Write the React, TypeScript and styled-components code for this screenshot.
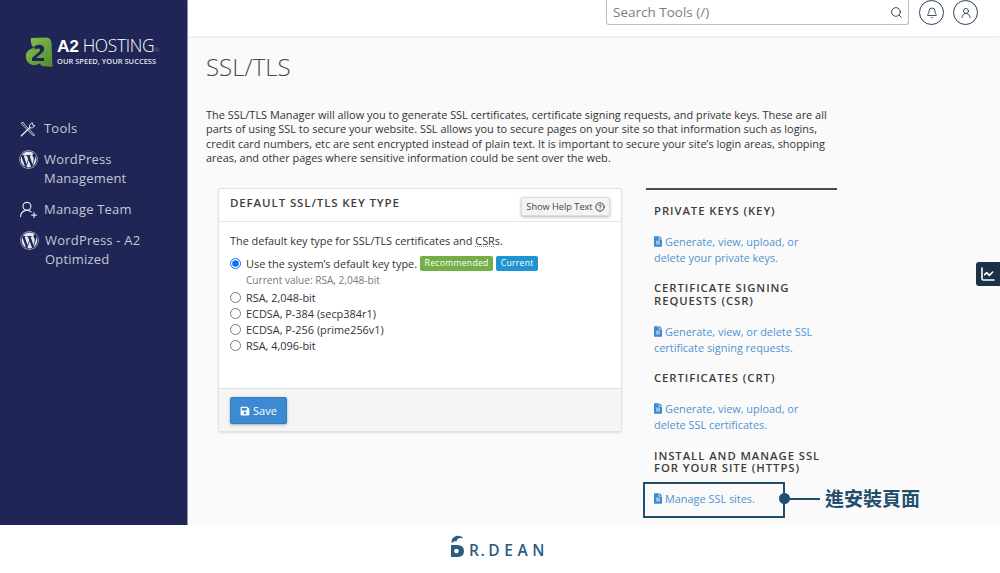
import React from 'react'
import styled, { createGlobalStyle } from 'styled-components'
import { Bell, Search, UserRoundPlus, UserRound, CircleHelp, ChartLine } from 'lucide-react'
import { FaWordpress, FaFileAlt, FaSave } from 'react-icons/fa'

const GlobalStyle = createGlobalStyle`
    html, body { margin:0; padding:0; background:#fff; }
    body { font-family:"Open Sans","Noto Sans",sans-serif; }
    * { box-sizing:border-box; }
`

const Page = styled.div`
    position:relative;
    width:1000px;
    height:573px;
    overflow:hidden;
    display:flex;
    flex-direction:column;
`

const Shot = styled.div`
    display:flex;
    height:525px;
`

const Sidebar = styled.aside`
    width:188px;
    flex:none;
    background:#1f2555;
    border-right:1px solid #8d90b0;
    padding-top:36px;
`

const LogoRow = styled.div`
    display:flex;
    align-items:center;
    gap:4px;
    padding-left:25px;
    height:31px;
`

const LogoText = styled.div`
    display:flex;
    flex-direction:column;
    color:#fff;
`

const LogoName = styled.div`
    font-size:17.4px;
    line-height:14px;
    font-weight:300;
    letter-spacing:-0.35px;
    white-space:nowrap;
    b { font-family:"Liberation Sans",sans-serif; font-weight:700; }
    small { font-size:6px; color:#9a9db5; }
`

const LogoTag = styled.div`
    font-size:7.5px;
    line-height:8px;
    font-weight:600;
    white-space:nowrap;
    color:#e4e5ee;
`

const Nav = styled.nav`
    margin-top:52px;
    display:flex;
    flex-direction:column;
    gap:12px;
`

const NavItem = styled.a<{ $shift?: number }>`
    display:flex;
    align-items:flex-start;
    gap:6px;
    padding-left:${p => p.$shift ?? 18}px;
    color:#c6c8d6;
    font-size:13px;
    line-height:19px;
    letter-spacing:0.2px;
    svg { flex:none; color:#e3e4ec; }
`

const NavIcon = styled.span`
    width:20px;
    height:19px;
    display:flex;
    align-items:center;
    justify-content:center;
    flex:none;
`

const Content = styled.div`
    flex:1;
    display:flex;
    flex-direction:column;
    background:#fafafa;
    min-width:0;
`

const Topbar = styled.header`
    height:36px;
    flex:none;
    background:#fff;
    box-shadow:0 1px 3px rgba(0,0,0,.08);
    display:flex;
    justify-content:flex-end;
    gap:9px;
    padding-right:22px;
`

const SearchBox = styled.div`
    width:303px;
    height:25px;
    margin-right:1px;
    border:1px solid #b9bccb;
    border-top:none;
    border-radius:0 0 3px 3px;
    background:#fff;
    display:flex;
    align-items:center;
    justify-content:space-between;
    padding:0 5px 0 6px;
    font-size:13.5px;
    color:#7d7d7d;
    svg { color:#3a4254; }
`

const RoundButton = styled.button`
    width:25px;
    height:25px;
    padding:0;
    border:1px solid #2d3a5c;
    border-radius:50%;
    background:#fff;
    color:#2d3a5c;
    display:flex;
    align-items:center;
    justify-content:center;
`

const Main = styled.main`
    padding:0 0 0 18px;
    position:relative;
    flex:1;
`

const Title = styled.h1`
    margin:15px 0 0;
    font-size:24px;
    line-height:32px;
    font-weight:300;
    color:#4a4a4a;
`

const Intro = styled.p`
    margin:25px 0 0;
    width:628px;
    font-size:10.93px;
    line-height:14.3px;
    color:#333;
`

const Columns = styled.div`
    display:flex;
    align-items:flex-start;
    margin-top:23px;
    padding-left:12px;
    gap:24px;
`

const Card = styled.section`
    width:404px;
    height:244px;
    background:#fff;
    border:1px solid #e2e2e2;
    border-radius:3px;
    box-shadow:0 1px 2px rgba(0,0,0,.1);
    display:flex;
    flex-direction:column;
`

const CardHeader = styled.div`
    height:33px;
    flex:none;
    border-bottom:1px solid #e6e6e6;
    display:flex;
    justify-content:space-between;
    padding:5px 11px 0 11px;
`

const CardTitle = styled.h2`
    margin:0;
    font-size:11.5px;
    line-height:17px;
    font-weight:600;
    letter-spacing:0.88px;
    color:#3d3d3d;
`

const HelpButton = styled.button`
    width:89px;
    height:19px;
    margin-top:3px;
    padding:0;
    border:1px solid #ddd;
    border-radius:2px;
    background:#f4f4f4;
    box-shadow:0 1px 3px rgba(0,0,0,.3);
    font:9.2px "Open Sans",sans-serif;
    color:#444;
    display:flex;
    align-items:center;
    justify-content:center;
    gap:2px;
`

const CardBody = styled.div`
    flex:1;
    padding:11px 11px 0;
    font-size:10.9px;
    color:#333;
`

const Lead = styled.p`
    margin:0 0 6px;
    line-height:16px;
    abbr { text-decoration:underline dotted #999; }
`

const RadioRow = styled.label`
    display:flex;
    align-items:center;
    gap:5px;
    height:16px;
`

const RadioLabel = styled.span`
    display:flex;
    align-items:center;
    gap:3px;
`

const Radio = styled.input.attrs({ type: 'radio' })`
    width:11px;
    height:11px;
    margin:0;
    flex:none;
    accent-color:#0d6efd;
`

const Badge = styled.span<{ $color: string }>`
    padding:0 4.5px;
    height:15px;
    display:inline-flex;
    align-items:center;
    border-radius:2px;
    background:${p => p.$color};
    color:#fff;
    font-size:8.6px;
    letter-spacing:0.3px;
`

const Hint = styled.div`
    margin:2px 0 1px 16px;
    font-size:10.1px;
    line-height:15px;
    color:#7a7a7a;
`

const CardFooter = styled.div`
    height:43px;
    flex:none;
    background:#f5f5f5;
    border-top:1px solid #e2e2e2;
    padding:8px 11px 0;
`

const SaveButton = styled.button`
    width:57px;
    height:27px;
    padding:0;
    border:1px solid #2f7cc0;
    border-radius:2px;
    background:#3c8ad1;
    box-shadow:0 1px 3px rgba(0,0,0,.3);
    color:#fff;
    font:11px "Open Sans",sans-serif;
    display:flex;
    align-items:center;
    justify-content:center;
    gap:3px;
`

const Side = styled.aside`
    width:191px;
    border-top:2px solid #4a4a4a;
    padding:15px 0 0 8px;
`

const SideHeading = styled.h3`
    margin:0 0 16px;
    font-size:11.3px;
    line-height:12.7px;
    font-weight:600;
    letter-spacing:0.95px;
    color:#3d3d3d;
`

const SideLink = styled.a`
    display:block;
    margin-bottom:16px;
    font-size:10.9px;
    line-height:16.3px;
    color:#4f93d1;
    svg { width:8px; height:11px; vertical-align:-1px; margin-right:3px; color:#3c8ad1; }
`

const Annotation = styled.div`
    position:absolute;
    left:643px;
    top:482px;
    width:142px;
    height:36px;
    border:2px solid #1f4e6e;
`

const CalloutDot = styled.span`
    position:absolute;
    left:779px;
    top:493px;
    width:11px;
    height:11px;
    border-radius:50%;
    background:#1f4e6e;
`

const CalloutLine = styled.span`
    position:absolute;
    left:788px;
    top:498px;
    width:32px;
    height:2px;
    background:#1f4e6e;
`

const CalloutText = styled.span`
    position:absolute;
    left:825px;
    top:485px;
    font-family:"Noto Sans CJK TC",sans-serif;
    font-size:19px;
    line-height:26px;
    font-weight:700;
    color:#1f4e6e;
`

const StatsTab = styled.div`
    position:absolute;
    right:0;
    top:262px;
    width:24px;
    height:24px;
    background:#1c3047;
    border-radius:3px 0 0 3px;
    color:#fff;
    display:flex;
    align-items:center;
    justify-content:center;
`

const Footer = styled.footer`
    height:48px;
    background:#fff;
    display:flex;
    align-items:flex-start;
    justify-content:center;
    padding-top:10px;
`

const Brand = styled.div`
    display:flex;
    align-items:flex-end;
    color:#2c5c80;
    font-size:15.5px;
    font-weight:600;
    line-height:13px;
    letter-spacing:4.6px;
`

const BrandInitial = styled.span`
    margin:0 2px 0 5px;
    letter-spacing:1.5px;
`

const A2Mark = () => (
    <svg width="28" height="30" viewBox="0 0 28 30">
        <defs>
            <linearGradient id="a2g" x1="0" y1="0" x2="1" y2="1">
                <stop offset="0" stopColor="#8cc152" />
                <stop offset="1" stopColor="#4f8a2c" />
            </linearGradient>
        </defs>
        <path d="M6 1 L22 0.5 Q26 1 26.5 6 L27.5 30 L17 29 L14.5 26.5 Q8 30 3.5 26 Q0 22 1 17 Q3 12 9 11 Q5 8 6 1 Z" fill="url(#a2g)" />
        <path d="M9 9.5 Q14 6.5 18 9 Q20.5 12 17.5 15.5 L11 21 L19 21 L19 24 L7 24 L7 21 L14.5 14.5 Q16 12.5 14 11.5 Q12 11 10 12.5 Z" fill="#1f2555" />
    </svg>
)

const ToolsIcon = () => (
    <svg width="16" height="16" viewBox="0 0 16 16" fill="none" stroke="currentColor" strokeWidth="1.4" strokeLinecap="round" strokeLinejoin="round">
        <path d="M1.5 2 L3 1.2 L5.5 4.6 L14.6 14 L13.6 15 L4.4 5.8 Z" strokeWidth="0.9" />
        <path d="M1.4 14.8 L9.8 6.4" />
        <path d="M9.8 6.4 L9.6 4 L12 1.6 L12.8 4.2 L15 4.6 L12.4 6.8 Z" strokeWidth="1" />
    </svg>
)

const DeanMark = () => (
    <svg width="13" height="22" viewBox="0 0 13 22">
        <path d="M0.5 8 Q0 2 6 0.8 Q10 0 12.5 3.2 L9.5 3 Q6 3.2 5.5 6.6 L4 6 Z" fill="#2c5c80" />
        <path d="M0 10 L6 10 Q13 10 13 16 Q13 22 6 22 L0 22 Z" fill="#2c5c80" />
        <circle cx="5.5" cy="16" r="2.3" fill="#fff" />
    </svg>
)

const App: React.FC = () => {
    return (
        <Page>
            <GlobalStyle />
            <Shot>
                <Sidebar>
                    <LogoRow>
                        <A2Mark />
                        <LogoText>
                            <LogoName><b>A2</b> HOSTING<small>®</small></LogoName>
                            <LogoTag>OUR SPEED, YOUR SUCCESS</LogoTag>
                        </LogoText>
                    </LogoRow>
                    <Nav>
                        <NavItem><NavIcon><ToolsIcon /></NavIcon>Tools</NavItem>
                        <NavItem><NavIcon><FaWordpress size={19} /></NavIcon><span>WordPress<br />Management</span></NavItem>
                        <NavItem><NavIcon><UserRoundPlus size={19} strokeWidth={1.5} /></NavIcon>Manage Team</NavItem>
                        <NavItem $shift={19}><NavIcon><FaWordpress size={19} /></NavIcon><span>WordPress - A2<br />Optimized</span></NavItem>
                    </Nav>
                </Sidebar>
                <Content>
                    <Topbar>
                        <SearchBox>Search Tools (/)<Search size={13} strokeWidth={1.8} /></SearchBox>
                        <RoundButton><Bell size={12} strokeWidth={1.8} /></RoundButton>
                        <RoundButton><UserRound size={12} strokeWidth={1.8} /></RoundButton>
                    </Topbar>
                    <Main>
                        <Title>SSL/TLS</Title>
                        <Intro>
                            The SSL/TLS Manager will allow you to generate SSL certificates, certificate signing requests, and private keys. These are all parts of using SSL to secure your website. SSL allows you to secure pages on your site so that information such as logins, credit card numbers, etc are sent encrypted instead of plain text. It is important to secure your site’s login areas, shopping areas, and other pages where sensitive information could be sent over the web.
                        </Intro>
                        <Columns>
                            <Card>
                                <CardHeader>
                                    <CardTitle>DEFAULT SSL/TLS KEY TYPE</CardTitle>
                                    <HelpButton>Show Help Text <CircleHelp size={10} strokeWidth={2.4} /></HelpButton>
                                </CardHeader>
                                <CardBody>
                                    <Lead>The default key type for SSL/TLS certificates and <abbr>CSR</abbr>s.</Lead>
                                    <RadioRow>
                                        <Radio name="key" defaultChecked />
                                        <RadioLabel>
                                            Use the system’s default key type.
                                            <Badge $color="#74ae47">Recommended</Badge>
                                            <Badge $color="#1f94d2">Current</Badge>
                                        </RadioLabel>
                                    </RadioRow>
                                    <Hint>Current value: RSA, 2,048-bit</Hint>
                                    <RadioRow><Radio name="key" />RSA, 2,048-bit</RadioRow>
                                    <RadioRow><Radio name="key" />ECDSA, P-384 (secp384r1)</RadioRow>
                                    <RadioRow><Radio name="key" />ECDSA, P-256 (prime256v1)</RadioRow>
                                    <RadioRow><Radio name="key" />RSA, 4,096-bit</RadioRow>
                                </CardBody>
                                <CardFooter>
                                    <SaveButton><FaSave size={10} /> Save</SaveButton>
                                </CardFooter>
                            </Card>
                            <Side>
                                <SideHeading>PRIVATE KEYS (KEY)</SideHeading>
                                <SideLink><FaFileAlt />Generate, view, upload, or<br />delete your private keys.</SideLink>
                                <SideHeading>CERTIFICATE SIGNING REQUESTS (CSR)</SideHeading>
                                <SideLink><FaFileAlt />Generate, view, or delete SSL certificate signing requests.</SideLink>
                                <SideHeading>CERTIFICATES (CRT)</SideHeading>
                                <SideLink><FaFileAlt />Generate, view, upload, or<br />delete SSL certificates.</SideLink>
                                <SideHeading>INSTALL AND MANAGE SSL FOR YOUR SITE (HTTPS)</SideHeading>
                                <SideLink><FaFileAlt />Manage SSL sites.</SideLink>
                            </Side>
                        </Columns>
                    </Main>
                </Content>
            </Shot>
            <Footer>
                <Brand><DeanMark /><BrandInitial>R.</BrandInitial>DEAN</Brand>
            </Footer>
            <Annotation />
            <CalloutDot />
            <CalloutLine />
            <CalloutText>進安裝頁面</CalloutText>
            <StatsTab><ChartLine size={16} strokeWidth={2.4} /></StatsTab>
        </Page>
    )
}

export default App
